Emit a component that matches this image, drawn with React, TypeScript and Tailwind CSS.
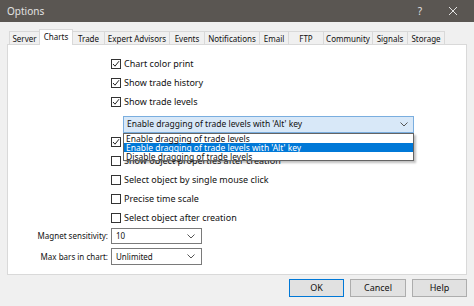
import React from "react";

const font = { fontFamily: '"Segoe UI", "Noto Sans", "Liberation Sans", sans-serif' };

function Chevron() {
  return (
    <svg width="8" height="5" viewBox="0 0 8 5" className="shrink-0">
      <path d="M0.5 0.5 L4 4 L7.5 0.5" fill="none" stroke="#555" strokeWidth="1" />
    </svg>
  );
}

function Check({ checked }: { checked?: boolean }) {
  return (
    <div className="w-[10px] h-[10px] border border-[#333] bg-white flex items-center justify-center shrink-0">
      {checked && (
        <svg width="8" height="8" viewBox="0 0 8 8">
          <path d="M1 4 L3 6.2 L7 1.2" fill="none" stroke="#222" strokeWidth="1" />
        </svg>
      )}
    </div>
  );
}

function Row({ label, checked }: { label: string; checked?: boolean }) {
  return (
    <div className="h-[19px] flex items-center gap-[3px] text-[9px] text-[#111] whitespace-nowrap">
      <Check checked={checked} />
      <span>{label}</span>
    </div>
  );
}

const tabs = [
  { t: "Server", w: 31 },
  { t: "Charts", w: 34, sel: true },
  { t: "Trade", w: 32 },
  { t: "Expert Advisors", w: 65 },
  { t: "Events", w: 35 },
  { t: "Notifications", w: 55 },
  { t: "Email", w: 29 },
  { t: "FTP", w: 35 },
  { t: "Community", w: 49 },
  { t: "Signals", w: 35 },
  { t: "Storage", w: 37 },
];

export default function App() {
  return (
    <div className="w-[474px] h-[306px] bg-[#f0f0f0] flex flex-col overflow-hidden" style={font}>
      <div className="h-[22px] bg-[#5a5652] flex items-center px-[7px] text-[#e2e2e2] shrink-0">
        <span className="text-[10px]">Options</span>
        <span className="ml-auto mr-[26px] text-[10px]">?</span>
        <svg width="10" height="10" viewBox="0 0 10 10" className="mr-[9px]">
          <path d="M1 1 L9 9 M9 1 L1 9" stroke="#e2e2e2" strokeWidth="1" />
        </svg>
      </div>
      <div className="flex flex-col px-[7px] pt-[7px]">
        <div className="flex items-end h-[16px] pl-[2px]">
          {tabs.map((tb, i) => (
            <div
              key={tb.t}
              style={{ width: tb.w }}
              className={
                tb.sel
                  ? "h-[16px] bg-white border-t border-x border-[#d9d9d9] flex items-start justify-center pt-[1px] text-[8px] text-[#111] -ml-[1px] relative z-10 whitespace-nowrap"
                  : i === 0
                  ? "h-[14px] bg-[#f0f0f0] border-t border-x border-[#d9d9d9] flex items-center justify-center text-[8px] text-[#111] whitespace-nowrap"
                  : "h-[14px] bg-[#f0f0f0] border-t border-r border-[#d9d9d9] flex items-center justify-center text-[8px] text-[#111] whitespace-nowrap"
              }
            >
              {tb.t}
            </div>
          ))}
        </div>
        <div className="h-[231px] bg-white border border-[#d9d9d9] -mt-[1px] relative pt-[9px] pl-[103px]">
          <Row label="Chart color print" checked />
          <Row label="Show trade history" checked />
          <Row label="Show trade levels" checked />
          <div className="ml-[12px] mt-[5px] w-[291px] h-[17px] bg-[#d8e8f8] border border-[#7aaedf] flex items-center pl-[3px] pr-[5px] text-[8.5px] text-[#111] whitespace-nowrap">
            <span>Enable dragging of trade levels with 'Alt' key</span>
            <span className="ml-auto"><Chevron /></span>
          </div>
          <div className="mt-[-1px]">
            <Row label="Show chart trade levels" checked />
            <Row label="Show object properties after creation" />
            <Row label="Select object by single mouse click" />
            <Row label="Precise time scale" />
            <Row label="Select object after creation" />
          </div>
          <div className="absolute left-[115px] top-[88px] w-[291px] bg-white border border-[#646464] shadow-[2px_2px_2px_rgba(0,0,0,0.25)] text-[8.5px] leading-[9px] whitespace-nowrap">
            <div className="h-[9px] pl-[2px] text-[#111]">Enable dragging of trade levels</div>
            <div className="h-[9px] pl-[2px] bg-[#0078d7] text-white">Enable dragging of trade levels with 'Alt' key</div>
            <div className="h-[8px] pl-[2px] text-[#111]">Disable dragging of trade levels</div>
          </div>
          <div className="absolute left-0 top-[183px] flex flex-col gap-[4px] text-[8px] text-[#111] whitespace-nowrap">
            <div className="flex items-center h-[16px]">
              <span className="w-[103px] text-right pr-[3px]">Magnet sensitivity:</span>
              <div className="w-[91px] h-[16px] border border-[#7a7a7a] bg-white flex items-center pl-[4px] pr-[6px]">
                <span>10</span>
                <span className="ml-auto"><Chevron /></span>
              </div>
            </div>
            <div className="flex items-center h-[17px]">
              <span className="w-[103px] text-right pr-[3px]">Max bars in chart:</span>
              <div className="w-[91px] h-[17px] border border-[#7a7a7a] bg-white flex items-center pl-[4px] pr-[6px]">
                <span>Unlimited</span>
                <span className="ml-auto"><Chevron /></span>
              </div>
            </div>
          </div>
        </div>
        <div className="flex justify-end gap-[6px] mt-[4px] text-[9px] text-[#111]">
          <div className="w-[55px] h-[18px] bg-[#e1e1e1] border border-[#0078d7] flex items-center justify-center">OK</div>
          <div className="w-[56px] h-[18px] bg-[#e1e1e1] border border-[#adadad] flex items-center justify-center">Cancel</div>
          <div className="w-[55px] h-[18px] bg-[#e1e1e1] border border-[#adadad] flex items-center justify-center">Help</div>
        </div>
      </div>
    </div>
  );
}
